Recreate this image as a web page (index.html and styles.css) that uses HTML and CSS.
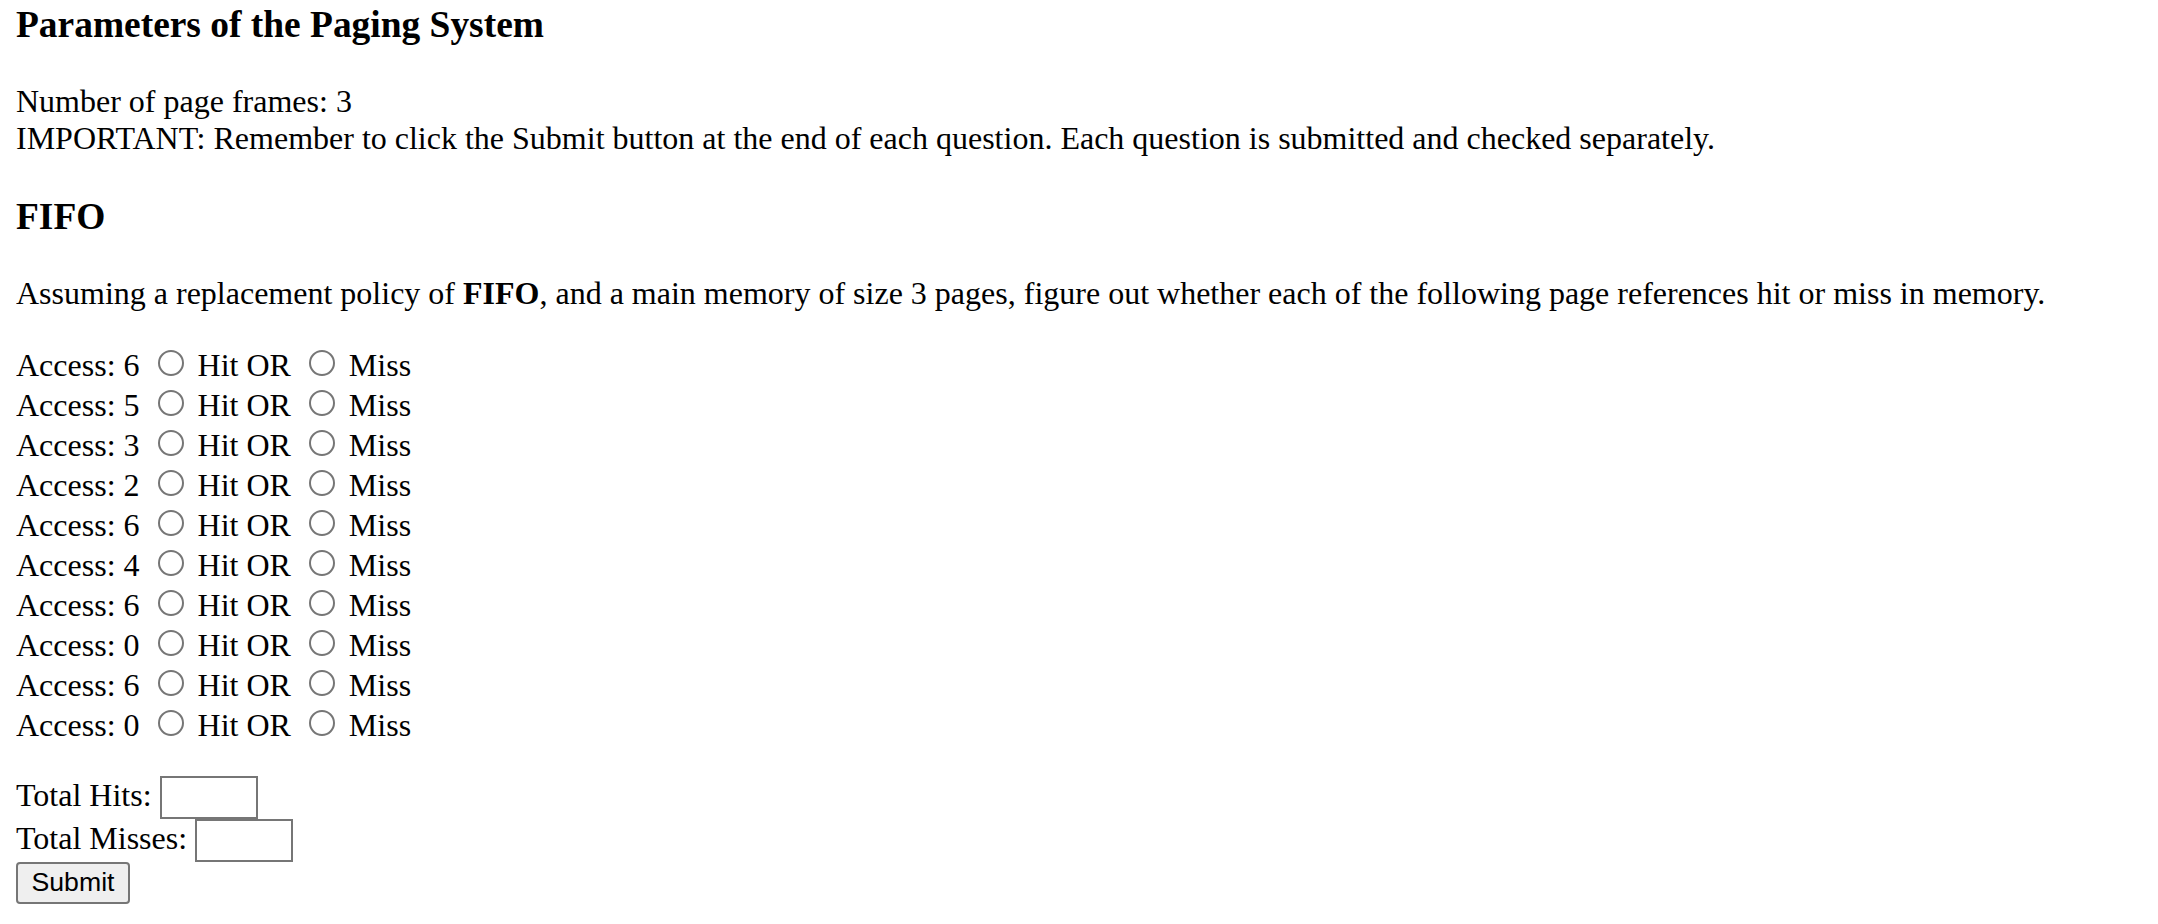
FILE: index.html
```html
<!DOCTYPE html>
<html lang="en">
<head>
<meta charset="utf-8">
<title>Paging System</title>
<link rel="stylesheet" href="styles.css">
</head>
<body>
<h3 class="title">Parameters of the Paging System</h3>
<p class="text">Number of page frames: 3<br>IMPORTANT: Remember to click the Submit button at the end of each question. Each question is submitted and checked separately.</p>
<h3 class="section">FIFO</h3>
<p class="text">Assuming a replacement policy of <b>FIFO</b>, and a main memory of size 3 pages, figure out whether each of the following page references hit or miss in memory.</p>
<form class="quiz">
<p class="text">
Access: 6 <input class="radio" type="radio" name="a0"> Hit OR <input class="radio" type="radio" name="a0"> Miss<br>
Access: 5 <input class="radio" type="radio" name="a1"> Hit OR <input class="radio" type="radio" name="a1"> Miss<br>
Access: 3 <input class="radio" type="radio" name="a2"> Hit OR <input class="radio" type="radio" name="a2"> Miss<br>
Access: 2 <input class="radio" type="radio" name="a3"> Hit OR <input class="radio" type="radio" name="a3"> Miss<br>
Access: 6 <input class="radio" type="radio" name="a4"> Hit OR <input class="radio" type="radio" name="a4"> Miss<br>
Access: 4 <input class="radio" type="radio" name="a5"> Hit OR <input class="radio" type="radio" name="a5"> Miss<br>
Access: 6 <input class="radio" type="radio" name="a6"> Hit OR <input class="radio" type="radio" name="a6"> Miss<br>
Access: 0 <input class="radio" type="radio" name="a7"> Hit OR <input class="radio" type="radio" name="a7"> Miss<br>
Access: 6 <input class="radio" type="radio" name="a8"> Hit OR <input class="radio" type="radio" name="a8"> Miss<br>
Access: 0 <input class="radio" type="radio" name="a9"> Hit OR <input class="radio" type="radio" name="a9"> Miss
</p>
<p class="text totals">
Total Hits: <input class="field" type="text"><br>
Total Misses: <input class="field" type="text"><br>
<button class="submit" type="button">Submit</button>
</p>
</form>
</body>
</html>
```
FILE: styles.css
```css
html {
  background: #ffffff;
}
body {
  margin: 0 16px;
  font-family: "Liberation Serif", "Times New Roman", serif;
  font-size: 32px;
  color: #000000;
}
h3 {
  font-size: 37.44px;
  font-weight: bold;
  margin: 37.44px 0;
}
h3.title {
  margin-top: 3px;
}
.text {
  margin: 32px 0;
}
.quiz {
  margin: 0;
}
.radio {
  -webkit-appearance: none;
  appearance: none;
  display: inline-block;
  box-sizing: border-box;
  width: 26px;
  height: 26px;
  margin: 6px 6px 0 10px;
  padding: 0;
  border: 2px solid #767676;
  border-radius: 50%;
  background: #ffffff;
  vertical-align: baseline;
}
.field {
  box-sizing: border-box;
  width: 98px;
  height: 42.67px;
  margin: 0;
  padding: 2px 4px;
  border: 2px solid #767676;
  border-radius: 0;
  font-family: "Liberation Sans", Arial, sans-serif;
  font-size: 26.67px;
  background: #ffffff;
  vertical-align: baseline;
}
.submit {
  box-sizing: border-box;
  width: 114px;
  height: 42.67px;
  margin: 0;
  padding: 2px 12px;
  border: 2px solid #767676;
  border-radius: 4px;
  background: #efefef;
  color: #000000;
  font-family: "Liberation Sans", Arial, sans-serif;
  font-size: 26.67px;
}
```
